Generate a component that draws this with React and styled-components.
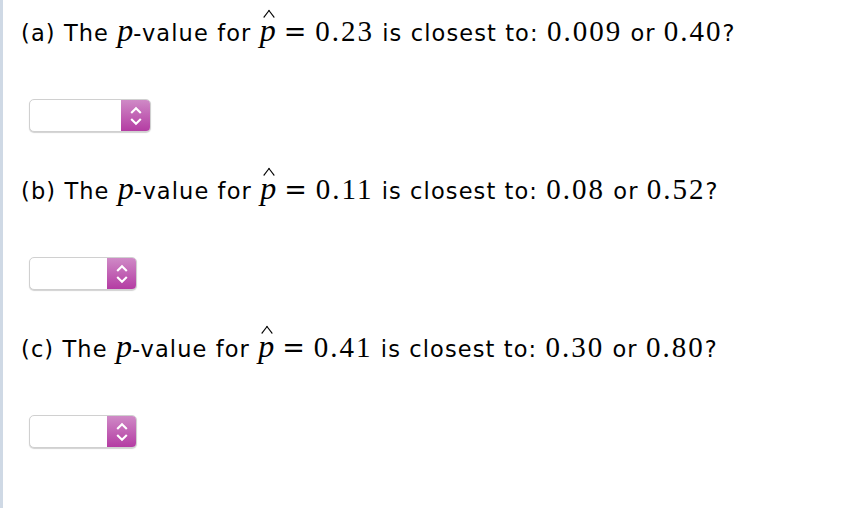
import styled, { createGlobalStyle } from 'styled-components';

const GlobalStyle = createGlobalStyle`
  html, body {
    margin: 0;
    padding: 0;
    background: #ffffff;
  }
`;

const questions = [
  { label: '(a)', phat: '0.23', first: '0.009', second: '0.40', width: 122 },
  { label: '(b)', phat: '0.11', first: '0.08', second: '0.52', width: 108 },
  { label: '(c)', phat: '0.41', first: '0.30', second: '0.80', width: 108 },
];

const Chevrons = () => (
  <svg width="12" height="22" viewBox="0 0 12 22" fill="none">
    <polyline points="1.2,8 6,3.2 10.8,8" stroke="#fff" strokeWidth="2.1" />
    <polyline points="1.2,14 6,18.8 10.8,14" stroke="#fff" strokeWidth="2.1" />
  </svg>
);

const App = () => {
  return (
    <Page>
      <GlobalStyle />
      {questions.map((q) => (
        <Question key={q.label}>
          <Prompt>
            {q.label} The <MathVar>p</MathVar>-value for{' '}
            <HatVar>p</HatVar>
            <Equals>=</Equals>
            <Num>{q.phat}</Num> is closest to: <Num>{q.first}</Num> or{' '}
            <Num>{q.second}</Num>?
          </Prompt>
          <Select $width={q.width}>
            <SelectValue />
            <SelectArrow>
              <Chevrons />
            </SelectArrow>
          </Select>
        </Question>
      ))}
    </Page>
  );
};

const Page = styled.div`
  min-height: 100vh;
  box-sizing: border-box;
  border-left: 3px solid #cfd9e5;
  padding: 17px 0 0 18px;
  font-family: 'DejaVu Sans', Verdana, sans-serif;
  color: #000;
`;

const Question = styled.div`
  display: flex;
  flex-direction: column;
  align-items: flex-start;
  padding-bottom: 43px;
`;

const Prompt = styled.p`
  margin: 0;
  font-size: 22.5px;
  line-height: 32px;
  letter-spacing: 1.1px;
  white-space: nowrap;
`;

const Num = styled.span`
  font-family: 'Liberation Serif', 'Times New Roman', serif;
  font-size: 29px;
  line-height: 24px;
  letter-spacing: 2px;
`;

const Equals = styled.span`
  font-family: 'DejaVu Serif', serif;
  font-size: 27px;
  line-height: 24px;
  letter-spacing: 0;
  margin: 0 9px 0 8px;
`;

const MathVar = styled.span`
  font-family: 'Liberation Serif', 'Times New Roman', serif;
  font-style: italic;
  font-size: 32px;
  line-height: 24px;
  letter-spacing: 0;
`;

const HatVar = styled(MathVar)`
  position: relative;
  display: inline-block;
  &::before {
    content: '';
    position: absolute;
    left: 5px;
    top: -5px;
    width: 7px;
    height: 7px;
    border-left: 1.3px solid #000;
    border-top: 1.3px solid #000;
    transform: scaleY(1.3) rotate(45deg);
  }
`;

const Select = styled.div`
  display: flex;
  width: ${(p) => p.$width}px;
  height: 33px;
  margin: 50px 0 0 8px;
  box-sizing: border-box;
  border: 1px solid #d0d0d0;
  border-radius: 5px;
  box-shadow: 0 1px 1px rgba(0, 0, 0, 0.18);
  overflow: hidden;
  background: #fff;
`;

const SelectValue = styled.div`
  flex: 1;
`;

const SelectArrow = styled.div`
  width: 29px;
  display: flex;
  align-items: center;
  justify-content: center;
  background: linear-gradient(#cf8ac6, #b43ca3);
`;

export default App;
